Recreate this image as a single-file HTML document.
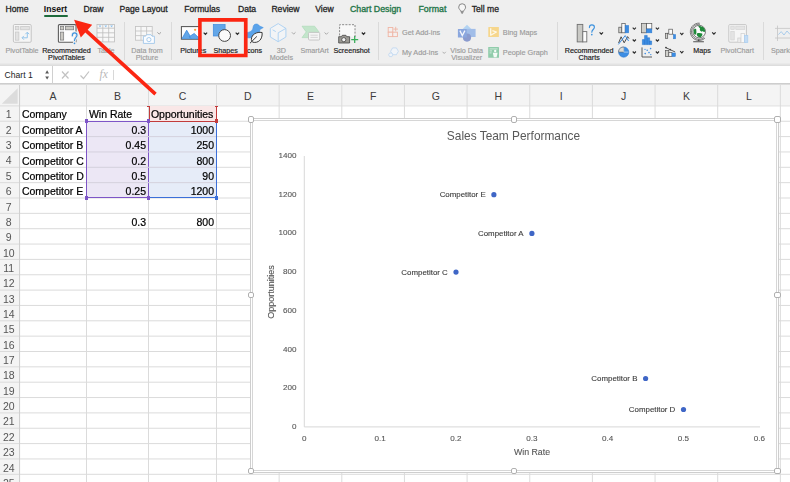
<!DOCTYPE html>
<html><head><meta charset="utf-8"><title>Excel</title>
<style>
html,body{margin:0;padding:0}
body{width:790px;height:482px;overflow:hidden;position:relative;background:#fff;font-family:"Liberation Sans",sans-serif;}
.abs{position:absolute}
.t{position:absolute;white-space:nowrap;line-height:1;}
.tab{font-size:8.6px;color:#262626;top:4.5px;-webkit-text-stroke:0.3px #262626}
.tabg{color:#26774a;-webkit-text-stroke:0.35px #26774a;font-size:8.8px}
.lb{font-size:7.2px;color:#1c1c1c;text-align:center;transform:translateX(-50%);-webkit-text-stroke:0.18px #1c1c1c;line-height:7.6px}
.lg{font-size:7.2px;color:#9b9b9b;-webkit-text-stroke:0.15px #9b9b9b;text-align:center;transform:translateX(-50%);line-height:7.5px}
.ll{font-size:7.3px;color:#9b9b9b;-webkit-text-stroke:0.15px #9b9b9b}
.sep{position:absolute;width:1px;background:#dadada;top:21.6px;height:38.6px}
.ch{font-size:10.5px;color:#3c3c3c;transform:translateX(-50%);top:91px}
.rh{font-size:10.5px;color:#555;left:0;width:17.5px;text-align:center}
.c{font-size:10.5px;color:#000;-webkit-text-stroke:0.22px #000}
.cr{font-size:10.5px;color:#000;text-align:right;-webkit-text-stroke:0.22px #000}
.cl{font-size:7.9px;color:#3c3c3c;-webkit-text-stroke:0.12px #3c3c3c}
.ax{font-size:8.1px;color:#555;-webkit-text-stroke:0.1px #555}
svg{position:absolute;overflow:visible}
</style></head><body>
<div id="app" style="position:absolute;left:0;top:0;width:790px;height:482px;overflow:hidden;opacity:0.999">

<div class="abs" style="left:0;top:0;width:790px;height:65px;background:#efefef"></div>
<div class="abs" style="left:0;top:62.5px;width:790px;height:3.7px;background:linear-gradient(#ececec,#dadada)"></div>
<div class="abs" style="left:0;top:66px;width:790px;height:18px;background:#fff"></div>
<div class="abs" style="left:0;top:83px;width:790px;height:2.4px;background:linear-gradient(#c6c6c6,#e4e4e4)"></div>
<div class="abs" style="left:0;top:85px;width:790px;height:20.4px;background:#f4f4f4"></div>
<div class="abs" style="left:0;top:105px;width:19.5px;height:377px;background:#f4f4f4"></div>
<span class="t tab " style="left:5.6px">Home</span>
<span class="t tab " style="left:83.5px">Draw</span>
<span class="t tab " style="left:119.5px">Page Layout</span>
<span class="t tab " style="left:184.3px">Formulas</span>
<span class="t tab " style="left:238px">Data</span>
<span class="t tab " style="left:271.4px">Review</span>
<span class="t tab " style="left:315.2px">View</span>
<span class="t tab tabg" style="left:349.9px">Chart Design</span>
<span class="t tab tabg" style="left:418.5px">Format</span>
<span class="t tab " style="left:471.7px">Tell me</span>
<span class="t tab" style="left:43.8px;font-weight:bold;-webkit-text-stroke:0;color:#111">Insert</span>
<div class="abs" style="left:43.5px;top:15.3px;width:24.5px;height:1.7px;background:#1e6b3c;border-radius:1px"></div>
<svg style="left:0;top:0" width="790" height="66" viewBox="0 0 790 66" fill="none">
<!-- PivotTable (disabled) -->
<g>
<rect x="13.4" y="24.5" width="17.8" height="17.8" rx="1.2" fill="#f6f6f6" stroke="#c0c0c0" stroke-width="0.9"/>
<rect x="15.3" y="26.4" width="3.6" height="3.4" fill="#e2e2e2" stroke="#c6c6c6" stroke-width="0.7"/>
<rect x="20.7" y="26.4" width="8.6" height="3.4" fill="#e2e2e2" stroke="#c6c6c6" stroke-width="0.7"/>
<rect x="15.3" y="32" width="3.6" height="8.2" fill="#e2e2e2" stroke="#c6c6c6" stroke-width="0.7"/>
<path d="M22.2 37.8H27.3V32.4M25.4 34.2L27.3 32.2L29.2 34.2M23.9 35.9L22 37.8L23.9 39.7" stroke="#96c6ec" stroke-width="1"/>
</g>
<!-- Recommended PivotTables -->
<g>
<rect x="58.4" y="24.6" width="17.6" height="17.6" rx="1" fill="#fdfdfd" stroke="#5e5e5e" stroke-width="1.1"/>
<rect x="60.3" y="26.5" width="3.4" height="3.3" fill="#cbc9c3" stroke="#777" stroke-width="0.7"/>
<rect x="65.5" y="26.5" width="8.2" height="3.3" fill="#cbc9c3" stroke="#777" stroke-width="0.7"/>
<rect x="60.3" y="32.1" width="3.4" height="8" fill="#cbc9c3" stroke="#777" stroke-width="0.7"/>
<rect x="70" y="31.5" width="9" height="13.5" fill="#efefef" opacity="0.0"/>
</g>
<!-- Table (disabled) -->
<g stroke="#bcbcbc" stroke-width="0.8">
<rect x="97" y="24.4" width="17.5" height="17.5" fill="#f8f8f8"/>
<path d="M102.8 24.4V41.9M108.7 24.4V41.9M97 28.2H114.5M97 32.8H114.5M97 37.3H114.5"/>
<path d="M98.5 25.6H101.5L100 27.2ZM104.3 25.6H107.3L105.8 27.2ZM110.1 25.6H113.1L111.6 27.2Z" fill="#86bdec" stroke="none"/>
</g>
<!-- Data from Picture (disabled) -->
<g stroke="#c0c0c0" stroke-width="0.8">
<rect x="135.4" y="26.4" width="16.8" height="13.8" fill="#f7f7f7"/>
<path d="M141 26.4V40.2M146.6 26.4V40.2M135.4 31H152.2M135.4 35.6H152.2"/>
<path d="M143.4 36.2H145.6L146.6 34.7H151L152 36.2H154.4V43.4H143.4Z" fill="#fafcff" stroke="#a4c9ea" stroke-width="0.95"/>
<circle cx="148.9" cy="39.6" r="2.1" fill="#fafcff" stroke="#a4c9ea" stroke-width="0.95"/>
<path d="M157.4 32.3L159.2 34.1L161 32.3" stroke="#a0a0a0" stroke-width="1"/>
</g>
<!-- Pictures -->
<g>
<rect x="181.4" y="26.6" width="19" height="12.6" fill="#fdfdfd" stroke="#505050" stroke-width="1"/>
<path d="M182 38.6L186.7 30.2L191.6 38.6Z" fill="#62a6e8" stroke="#2f80d8" stroke-width="0.7" stroke-linejoin="round"/>
<path d="M189.4 36.6L194.2 33.4L199.6 38.6H190.6Z" fill="#62a6e8" stroke="#2f80d8" stroke-width="0.7" stroke-linejoin="round"/>
<rect x="182" y="38.4" width="18" height="0.5" fill="#62a6e8"/>
<circle cx="195.1" cy="29.8" r="1.15" fill="#f5a141"/>
<path d="M203.7 32.6L205.4 34.4L207.1 32.6" stroke="#2a2a2a" stroke-width="1.2"/>
</g>
<!-- Shapes -->
<g>
<rect x="213.3" y="24.5" width="11.8" height="11.5" fill="#62a6e8" stroke="#3f8ade" stroke-width="0.7"/>
<circle cx="224.6" cy="35.5" r="5.9" fill="#fafafa" stroke="#444" stroke-width="1"/>
<path d="M235.7 32.6L237.4 34.4L239.1 32.6" stroke="#2a2a2a" stroke-width="1.2"/>
</g>
<!-- Icons -->
<g>
<path d="M253 27.4C252.6 30.6 250.4 32.4 246 32.6L246 37.6C249 38.2 254 38 257 36.6C259.4 35 260 31.6 259.7 29.7L263.3 27.6L259.5 26C258.6 24.4 257.2 23.9 256 24C254.2 24.2 253.2 25.6 253 27.4Z" fill="#5aa3ea" stroke="#3f8fe2" stroke-width="0.5"/>
<path d="M262.1 32.5C256.6 31.6 251.4 34.4 251.4 39.4C251.4 40.8 252 41.8 252.8 42.2C258.2 43.4 262.7 39.6 262.1 32.5Z" fill="#f8f8f8" stroke="#3a3a3a" stroke-width="1"/>
<path d="M250 43.2L256.9 36.4" stroke="#3a3a3a" stroke-width="1"/>
</g>
<!-- 3D Models (disabled) -->
<g stroke="#a9cff2" stroke-width="0.9">
<path d="M278.2 23.6L285.9 28.4V37L278.2 41.7L270.3 37V28.4Z" fill="#f2f4f6"/>
<path d="M272.6 29.8L275.8 31.6M278.2 32.8L285.9 28.4M278.2 32.8V41.7"/>
<path d="M291.9 32.3L293.7 34.1L295.5 32.3" stroke="#a8a8a8" stroke-width="1"/>
</g>
<!-- SmartArt (disabled) -->
<g>
<path d="M302 26.2H314.6L319 31.9L314.6 37.6H302L306.2 31.9Z" fill="#c3e5cb" stroke="#a8d8b4" stroke-width="0.6"/>
<rect x="308.5" y="32.4" width="11.2" height="7.6" rx="1" fill="#f5f5f5" stroke="#bdbdbd" stroke-width="0.8"/>
<path d="M310.4 35.2H317.8M310.4 37.4H317.8" stroke="#c8c8c8" stroke-width="0.7"/>
<path d="M324.6 32.5L326.4 34.3L328.2 32.5" stroke="#a8a8a8" stroke-width="1"/>
</g>
<!-- Screenshot -->
<g>
<path d="M339.6 35.4V24.7H355V37" fill="#f8f8f8" stroke="#6e6e6e" stroke-width="0.8" stroke-dasharray="2 1.3"/>
<path d="M338.7 36.7H341.4L342.3 35.3H345.9L346.8 36.7H349.6V43H338.7Z" fill="#9c9a94" stroke="#444" stroke-width="0.8" stroke-linejoin="round"/>
<circle cx="343.8" cy="39.7" r="2.1" fill="#f3f3f3" stroke="#444" stroke-width="0.8"/>
<path d="M354.7 36.1V43.1M351.2 39.6H358.2" stroke="#36ad57" stroke-width="1.25"/>
<path d="M361.8 32.5L363.5 34.3L365.2 32.5" stroke="#2a2a2a" stroke-width="1.2"/>
</g>
<!-- Get Add-ins (disabled) -->
<g stroke="#efb5a5" stroke-width="0.9">
<rect x="388.2" y="27.5" width="4.6" height="4.7" fill="#f5efee"/>
<rect x="388.2" y="32.2" width="4.6" height="4.4" fill="#f5efee"/>
<rect x="392.8" y="32.2" width="4.6" height="4.4" fill="#f5efee"/>
<path d="M395.7 26.8V31.4M393.4 29.1H398"/>
</g>
<!-- My Add-ins (disabled) -->
<g stroke="#bcd6f0" stroke-width="0.8">
<path d="M398.4 51.3L396.4 54.7L392.6 54.7L390.6 51.3L392.6 47.9L396.4 47.9Z" fill="#f1f4f8"/>
<path d="M392.8 54.8L391.8 56.6L389.6 56.6L388.6 54.8L389.6 53.0L391.8 53.0Z" fill="#f1f4f8"/>
<path d="M442.6 51.8L444.2 53.5L445.8 51.8" stroke="#a8a8a8" stroke-width="0.9"/>
</g>
<!-- Visio -->
<g>
<path d="M467 24.7L473.4 31L467 37.3L460.6 31Z" fill="#b3d3f2"/>
<rect x="466.6" y="28.9" width="9" height="8.1" fill="#a1bde8"/>
<circle cx="467" cy="37.6" r="4.1" fill="#8b9bce"/>
<rect x="457.9" y="28.9" width="8.9" height="8.7" rx="0.4" fill="#8ba7de"/>
<path d="M459.9 30.6L462.3 35.6L464.9 30.6" stroke="#f4f6fc" stroke-width="1.3"/>
</g>
<!-- Bing Maps -->
<g>
<rect x="488.3" y="26.9" width="10.6" height="10.1" rx="0.3" fill="#f6d68c"/>
<path d="M490.7 28.2V35.2L496.4 32L492.4 30.6" stroke="#fdf8ea" stroke-width="1.3" stroke-linejoin="round"/>
</g>
<!-- People Graph -->
<g>
<rect x="488.2" y="47.1" width="10.8" height="10.6" rx="0.3" fill="#90ccab"/>
<path d="M489.6 48.9H497.6M489.6 50.9H492M489.6 52.9H491.6" stroke="#dff1e6" stroke-width="0.8"/>
<circle cx="495.2" cy="51" r="1.2" fill="#f4fbf6"/>
<path d="M492.8 52.8H497.6L496.6 57.2H493.8Z" fill="#f4fbf6"/>
</g>
<!-- Recommended Charts -->
<g>
<rect x="577.2" y="24.4" width="5.6" height="17.5" fill="#c9c9c5" stroke="#707070" stroke-width="0.9"/>
<rect x="582.8" y="31.6" width="4" height="10.3" fill="#fdfdfd" stroke="#707070" stroke-width="0.9"/>
<path d="M599.6 32.3L601.3 34.1L603 32.3" stroke="#2a2a2a" stroke-width="1.2"/>
</g>
<!-- small chart icons col1 -->
<g>
<rect x="618.8" y="27.2" width="3" height="5.6" fill="#d0d0cc" stroke="#555" stroke-width="0.7"/>
<rect x="621.8" y="23.6" width="3.4" height="9.2" fill="#fbfbfb" stroke="#555" stroke-width="0.7"/>
<rect x="625.2" y="25.6" width="3.4" height="7.2" fill="#3c8de3" stroke="#2f7bd0" stroke-width="0.6"/>
<path d="M618.6 43L621.1 36.8L624.2 42.8L627.6 36.6L629 38.6" stroke="#3a3a3a" stroke-width="0.9"/>
<path d="M618.4 44.4L625.2 35.6L628.6 41" stroke="#3c8de3" stroke-width="1"/>
<circle cx="623.7" cy="52.1" r="5.1" fill="#3c8de3" stroke="#2f7bd0" stroke-width="0.6"/>
<path d="M623.7 52.1V47H623.2A5.1 5.1 0 0 0 618.6 52.1Z" fill="#dcdcd8" stroke="#666" stroke-width="0.6"/>
<path d="M623.7 47.6V52.1H628.3" stroke="#e8f1fc" stroke-width="0.6"/>
</g>
<!-- col2 -->
<g>
<rect x="641.6" y="23.6" width="5" height="9.2" fill="#cfcfcb" stroke="#555" stroke-width="0.7"/>
<rect x="646.6" y="23.6" width="5.2" height="5.4" fill="#fbfbfb" stroke="#555" stroke-width="0.7"/>
<rect x="646.6" y="29" width="5.2" height="3.8" fill="#3c8de3" stroke="#2f7bd0" stroke-width="0.6"/>
<path d="M642.4 44.6V39.6H644.6V35.4H647.2V37.8H649.6V41H651.6V44.6Z" fill="#3c8de3" stroke="#2a78d0" stroke-width="0.6"/>
<path d="M644.6 39.6V44.6M647.2 37.8V44.6M649.6 41V44.6" stroke="#2a6fc4" stroke-width="0.5"/>
<path d="M642 47.4V57H652" stroke="#4a4a4a" stroke-width="0.9"/>
<g fill="#3c8de3"><circle cx="645.2" cy="53.6" r="0.8"/><circle cx="647.2" cy="50.2" r="0.8"/><circle cx="649" cy="52.6" r="0.8"/><circle cx="650.6" cy="48.6" r="0.8"/><circle cx="650.8" cy="54.6" r="0.7"/><circle cx="645" cy="49.4" r="0.6"/></g>
</g>
<!-- col3 -->
<g>
<rect x="665.5" y="33.3" width="2.2" height="5" fill="#d2d2ce" stroke="#555" stroke-width="0.7"/>
<rect x="668.8" y="29.2" width="3.6" height="5" fill="#fbfbfb" stroke="#555" stroke-width="0.7"/>
<path d="M667.7 33.3H668.8M672.4 34.2H673.5" stroke="#555" stroke-width="0.7"/>
<rect x="673.4" y="34.6" width="2.2" height="4.2" fill="#3c8de3" stroke="#2f7bd0" stroke-width="0.5"/>
<path d="M665.4 47.4L670 49.6L675.2 52" stroke="#444" stroke-width="0.9"/>
<circle cx="666" cy="47.6" r="0.9" fill="#444"/><circle cx="670.2" cy="49.6" r="0.9" fill="#444"/>
<rect x="665.6" y="50.6" width="3.2" height="6" fill="#d0d0cc" stroke="#555" stroke-width="0.7"/>
<rect x="668.8" y="52.4" width="3.2" height="4.2" fill="#fbfbfb" stroke="#555" stroke-width="0.7"/>
<rect x="672" y="53" width="3.4" height="3.6" fill="#3c8de3" stroke="#2f7bd0" stroke-width="0.5"/>
</g>
<!-- chevrons for small charts -->
<g stroke="#2a2a2a" stroke-width="1.1">
<path d="M632.7 27.6L634.3 29.3L635.9 27.6M632.7 39.5L634.3 41.2L635.9 39.5M632.7 51.5L634.3 53.2L635.9 51.5"/>
<path d="M655.8 27.6L657.4 29.3L659 27.6M655.8 39.5L657.4 41.2L659 39.5M655.8 51.5L657.4 53.2L659 51.5"/>
<path d="M680.2 32.9L681.8 34.6L683.4 32.9M680.2 51.2L681.8 52.9L683.4 51.2"/>
</g>
<!-- Maps globe -->
<g>
<circle cx="699.2" cy="31.6" r="6.3" fill="#fcfcfc" stroke="#5a5a5a" stroke-width="0.8"/>
<path d="M693.6 30.2C694 29.2 695 28.6 695.8 28.8C696.6 29.4 696.2 30.6 696.4 31.8C696.6 33 696 34.2 695.2 35C694.2 34.4 693.4 32.2 693.6 30.2Z" fill="#1f8a3a"/>
<path d="M698.4 26C699.4 25.6 700.4 25.8 701 26.6C702.6 26.4 704 27.6 704.8 29.4C705.2 30.6 705.2 31.6 704.4 32C703.2 31.4 702.2 32 701 31.2C699.8 30.6 699.6 29.2 700 28.2C699.2 27.8 698.4 27 698.4 26Z" fill="#1f8a3a"/>
<path d="M696.8 33.6C698.4 32.8 700.6 33 702.2 33.6C702.8 34.8 702 36.2 700.8 37.2C699.8 37.6 698.6 37.4 697.8 36.6C697 35.8 696.4 34.6 696.8 33.6Z" fill="#1f8a3a"/>
<path d="M699.6 23.1A8.7 8.7 0 1 0 704.9 38.2" stroke="#4a4a4a" stroke-width="0.7"/>
<path d="M700 24.2A7.6 7.6 0 1 0 704.2 37.4" stroke="#4a4a4a" stroke-width="0.7"/>
<path d="M698.6 39.4V41.2" stroke="#4a4a4a" stroke-width="1.2"/>
<path d="M693.2 41.7H703.9" stroke="#6a6a6a" stroke-width="1.2"/>
<path d="M712.2 32.4L713.9 34.2L715.6 32.4" stroke="#2a2a2a" stroke-width="1.2"/>
</g>
<!-- PivotChart (disabled) -->
<g>
<rect x="728.8" y="24.6" width="17.6" height="17.6" rx="1" fill="#f6f6f6" stroke="#c2c2c2" stroke-width="0.9"/>
<rect x="730.8" y="26.2" width="3.4" height="3.3" fill="#e4e4e4" stroke="#d0d0d0" stroke-width="0.6"/>
<rect x="735.8" y="26.2" width="9" height="3.3" fill="#e4e4e4" stroke="#d0d0d0" stroke-width="0.6"/>
<rect x="730.8" y="31.4" width="3.4" height="8.6" fill="#e4e4e4" stroke="#d0d0d0" stroke-width="0.6"/>
<rect x="737.8" y="38" width="3.2" height="4.6" fill="#ececec" stroke="#cfcfcf" stroke-width="0.7"/>
<rect x="741" y="33.6" width="3.4" height="9" fill="#f8f8f8" stroke="#cfcfcf" stroke-width="0.7"/>
<rect x="744.4" y="35.6" width="3.4" height="7" fill="#c3dcf5" stroke="#a9cdf0" stroke-width="0.7"/>
</g>
<!-- Sparklines (disabled, cut off) -->
<g stroke="#c4c4c4" stroke-width="0.8">
<path d="M777.5 25.6V41M775 28.4H790M775 38H790"/>
<path d="M778.4 34.6L781.2 31.6L784 35L787 31L790 34.4" stroke="#a4c9ea" stroke-width="0.95"/>
</g>
<!-- Tell me bulb -->
<g stroke="#6a6a6a" stroke-width="0.8">
<path d="M460.7 11.3C460.5 9.9 458.7 9.1 458.7 7.2A3.45 3.45 0 0 1 465.6 7.2C465.6 9.1 463.8 9.9 463.6 11.3Z" fill="#f6f6f6"/>
<path d="M460.9 12.3H463.4M461.5 13.3H462.8"/>
</g>
<!-- question marks -->
<g fill="none" stroke-linecap="round">
<path d="M72.3 35.8C72.3 33.6 73.4 32.9 74.7 32.9C76 32.9 77 33.8 77 35.2C77 37.4 74.5 37.6 74.5 40.6" stroke="#efefef" stroke-width="3.4"/>
<circle cx="74.5" cy="43.3" r="1.8" fill="#efefef" stroke="none"/>
<path d="M72.3 35.8C72.3 33.6 73.4 32.9 74.7 32.9C76 32.9 77 33.8 77 35.2C77 37.4 74.5 37.6 74.5 40.6" stroke="#3f93de" stroke-width="1.15"/>
<circle cx="74.5" cy="43.3" r="0.85" fill="#3f93de" stroke="none"/>
<path d="M589.4 27.6C589.4 25.6 590.6 24.9 591.9 24.9C593.2 24.9 594.4 25.8 594.4 27.2C594.4 29.4 591.8 29.6 591.8 32.2" stroke="#3f93de" stroke-width="1.15"/>
<circle cx="591.8" cy="34.6" r="0.85" fill="#3f93de" stroke="none"/>
</g>
</svg>
<span class="t lg" style="left:22px;top:46.9px">PivotTable</span>
<span class="t lb" style="left:66.5px;top:46.9px">Recommended<br>PivotTables</span>
<span class="t lg" style="left:106px;top:46.9px">Table</span>
<span class="t lg" style="left:147px;top:46.9px">Data from<br>Picture</span>
<span class="t lb" style="left:193.3px;top:46.9px">Pictures</span>
<span class="t lb" style="left:225.7px;top:46.9px">Shapes</span>
<span class="t lb" style="left:253.6px;top:46.9px">Icons</span>
<span class="t lg" style="left:281.4px;top:46.9px">3D<br>Models</span>
<span class="t lg" style="left:314.7px;top:46.9px">SmartArt</span>
<span class="t lb" style="left:351.6px;top:46.9px">Screenshot</span>
<span class="t ll" style="left:402px;top:28.5px">Get Add-ins</span>
<span class="t ll" style="left:402px;top:48.7px">My Add-ins</span>
<span class="t lg" style="left:466.7px;top:46.9px">Visio Data<br>Visualizer</span>
<span class="t ll" style="left:502.8px;top:28.5px">Bing Maps</span>
<span class="t ll" style="left:502.8px;top:48.7px">People Graph</span>
<span class="t lb" style="left:589.2px;top:46.9px">Recommended<br>Charts</span>
<span class="t lb" style="left:702px;top:46.9px">Maps</span>
<span class="t lg" style="left:737.2px;top:46.9px">PivotChart</span>
<span class="t lg" style="left:771px;top:46.9px;transform:none">Sparklines</span>
<div class="sep" style="left:123.5px"></div>
<div class="sep" style="left:171.3px"></div>
<div class="sep" style="left:378.2px"></div>
<div class="sep" style="left:557.3px"></div>
<div class="sep" style="left:762.5px"></div>
<span class="t" style="left:4.6px;top:70.9px;font-size:8.6px;color:#222">Chart 1</span>
<div class="abs" style="left:52px;top:66px;width:1px;height:18px;background:#d0d0d0"></div>
<div class="abs" style="left:113px;top:70px;width:1px;height:10px;background:#d8d8d8"></div>
<svg style="left:0;top:0" width="790" height="100">
<path d="M45.2 73.4 L47.1 70.3 L49 73.4 Z M45.2 76.5 L47.1 79.6 L49 76.5 Z" fill="#5a5a5a"/>
<path d="M62 71.5 L68.5 78.5 M68.5 71.5 L62 78.5" stroke="#c2c2c2" stroke-width="1.2" fill="none"/>
<path d="M80.5 75.5 L83.5 78.5 L89 71.5" stroke="#c2c2c2" stroke-width="1.2" fill="none"/>
</svg>
<span class="t" style="left:99.6px;top:68.6px;font-size:11.5px;font-style:italic;color:#b8b8b8;font-family:'Liberation Serif',serif">fx</span>
<svg style="left:0;top:0" width="790" height="482"><path d="M19.5 85V482 M86.5 85V482 M148.5 85V482 M216.5 85V482 M279.15 85V482 M341.8 85V482 M404.45 85V482 M467.1 85V482 M529.75 85V482 M592.4 85V482 M655.05 85V482 M717.7 85V482 M780.35 85V482 M843.0 85V482 M0 105.90H790 M0 121.25H790 M0 136.60H790 M0 151.95H790 M0 167.30H790 M0 182.65H790 M0 198.00H790 M0 213.35H790 M0 228.70H790 M0 244.05H790 M0 259.40H790 M0 274.75H790 M0 290.10H790 M0 305.45H790 M0 320.80H790 M0 336.15H790 M0 351.50H790 M0 366.85H790 M0 382.20H790 M0 397.55H790 M0 412.90H790 M0 428.25H790 M0 443.60H790 M0 458.95H790 M0 474.30H790 M0 489.65H790" stroke="#dbdbdb" stroke-width="1" fill="none"/><path d="M1.8 103.7 L17.7 103.7 L17.7 88.2 Z" fill="#dcdcdc"/><path d="M19.6 85V482" stroke="#cfcfcf" stroke-width="1" fill="none"/></svg>
<span class="t ch" style="left:53.0px">A</span>
<span class="t ch" style="left:117.5px">B</span>
<span class="t ch" style="left:182.5px">C</span>
<span class="t ch" style="left:247.8px">D</span>
<span class="t ch" style="left:310.5px">E</span>
<span class="t ch" style="left:373.1px">F</span>
<span class="t ch" style="left:435.8px">G</span>
<span class="t ch" style="left:498.4px">H</span>
<span class="t ch" style="left:561.1px">I</span>
<span class="t ch" style="left:623.7px">J</span>
<span class="t ch" style="left:686.4px">K</span>
<span class="t ch" style="left:749.0px">L</span>
<span class="t ch" style="left:811.7px">M</span>
<span class="t rh" style="top:109.4px">1</span>
<span class="t rh" style="top:124.8px">2</span>
<span class="t rh" style="top:140.1px">3</span>
<span class="t rh" style="top:155.4px">4</span>
<span class="t rh" style="top:170.8px">5</span>
<span class="t rh" style="top:186.2px">6</span>
<span class="t rh" style="top:201.5px">7</span>
<span class="t rh" style="top:216.9px">8</span>
<span class="t rh" style="top:232.2px">9</span>
<span class="t rh" style="top:247.6px">10</span>
<span class="t rh" style="top:262.9px">11</span>
<span class="t rh" style="top:278.2px">12</span>
<span class="t rh" style="top:293.6px">13</span>
<span class="t rh" style="top:308.9px">14</span>
<span class="t rh" style="top:324.3px">15</span>
<span class="t rh" style="top:339.6px">16</span>
<span class="t rh" style="top:355.0px">17</span>
<span class="t rh" style="top:370.4px">18</span>
<span class="t rh" style="top:385.7px">19</span>
<span class="t rh" style="top:401.0px">20</span>
<span class="t rh" style="top:416.4px">21</span>
<span class="t rh" style="top:431.8px">22</span>
<span class="t rh" style="top:447.1px">23</span>
<span class="t rh" style="top:462.5px">24</span>
<span class="t rh" style="top:477.8px">25</span>
<div class="abs" style="left:86.2px;top:120.8px;width:62.9px;height:77.4px;background:#ece7f5;box-sizing:border-box;border:1.2px solid #7e55c7"></div>
<div class="abs" style="left:149px;top:120.8px;width:67.8px;height:77.4px;background:#e6ecf8;box-sizing:border-box;border:1.2px solid #3b6fd9;border-left:none;border-top:none"></div>
<div class="abs" style="left:148.5px;top:106.4px;width:68.3px;height:15.2px;background:#f9e7e7;box-sizing:border-box;border:1.2px solid #c23b3b;border-top:none"></div>
<svg style="left:0;top:0" width="790" height="482"><path d="M87.5 136.60H216 M87.5 151.95H216 M87.5 167.30H216 M87.5 182.65H216" stroke="#d4d1dd" stroke-width="1" fill="none"/></svg>
<div class="abs" style="left:84.8px;top:119.3px;width:3.4px;height:3.4px;background:#7e55c7"></div>
<div class="abs" style="left:147.10000000000002px;top:119.3px;width:3.4px;height:3.4px;background:#7e55c7"></div>
<div class="abs" style="left:84.8px;top:196.3px;width:3.4px;height:3.4px;background:#7e55c7"></div>
<div class="abs" style="left:147.10000000000002px;top:196.3px;width:3.4px;height:3.4px;background:#7e55c7"></div>
<div class="abs" style="left:214.8px;top:196.3px;width:3.4px;height:3.4px;background:#3b6fd9"></div>
<div class="abs" style="left:214.8px;top:119.3px;width:3.4px;height:3.4px;background:#c23b3b"></div>
<div class="abs" style="left:147.3px;top:105.6px;width:3px;height:1.2px;background:#c23b3b"></div>
<div class="abs" style="left:215px;top:105.6px;width:3px;height:1.2px;background:#c23b3b"></div>
<span class="t c" style="left:21.9px;top:108.6px">Company</span>
<span class="t c" style="left:88.9px;top:108.6px">Win Rate</span>
<span class="t c" style="left:150.9px;top:108.6px">Opportunities</span>
<span class="t c" style="left:21.9px;top:124.8px">Competitor A</span>
<span class="t cr" style="right:644.0px;top:124.8px">0.3</span>
<span class="t cr" style="right:576.0px;top:124.8px">1000</span>
<span class="t c" style="left:21.9px;top:140.2px">Competitor B</span>
<span class="t cr" style="right:644.0px;top:140.2px">0.45</span>
<span class="t cr" style="right:576.0px;top:140.2px">250</span>
<span class="t c" style="left:21.9px;top:155.5px">Competitor C</span>
<span class="t cr" style="right:644.0px;top:155.5px">0.2</span>
<span class="t cr" style="right:576.0px;top:155.5px">800</span>
<span class="t c" style="left:21.9px;top:170.9px">Competitor D</span>
<span class="t cr" style="right:644.0px;top:170.9px">0.5</span>
<span class="t cr" style="right:576.0px;top:170.9px">90</span>
<span class="t c" style="left:21.9px;top:186.2px">Competitor E</span>
<span class="t cr" style="right:644.0px;top:186.2px">0.25</span>
<span class="t cr" style="right:576.0px;top:186.2px">1200</span>
<span class="t cr" style="right:644.0px;top:217.0px">0.3</span>
<span class="t cr" style="right:576.0px;top:217.0px">800</span>
<div class="abs" style="left:249.5px;top:118.0px;width:529.5px;height:354.5px;background:#fff;box-sizing:border-box;border:1px solid #cecece"></div>
<div class="abs" style="left:251.5px;top:120.0px;width:525.5px;height:350.5px;background:#fff;box-sizing:border-box;border:1px solid #d6d6d6"></div>
<div class="abs" style="left:247.5px;top:116.0px;width:6.6px;height:6.6px;background:#fff;box-sizing:border-box;border:1px solid #b0b0b0;border-radius:2px"></div>
<div class="abs" style="left:510.75px;top:116.0px;width:6.6px;height:6.6px;background:#fff;box-sizing:border-box;border:1px solid #b0b0b0;border-radius:2px"></div>
<div class="abs" style="left:774.0px;top:116.0px;width:6.6px;height:6.6px;background:#fff;box-sizing:border-box;border:1px solid #b0b0b0;border-radius:2px"></div>
<div class="abs" style="left:247.5px;top:291.75px;width:6.6px;height:6.6px;background:#fff;box-sizing:border-box;border:1px solid #b0b0b0;border-radius:2px"></div>
<div class="abs" style="left:774.0px;top:291.75px;width:6.6px;height:6.6px;background:#fff;box-sizing:border-box;border:1px solid #b0b0b0;border-radius:2px"></div>
<div class="abs" style="left:247.5px;top:467.5px;width:6.6px;height:6.6px;background:#fff;box-sizing:border-box;border:1px solid #b0b0b0;border-radius:2px"></div>
<div class="abs" style="left:510.75px;top:467.5px;width:6.6px;height:6.6px;background:#fff;box-sizing:border-box;border:1px solid #b0b0b0;border-radius:2px"></div>
<div class="abs" style="left:774.0px;top:467.5px;width:6.6px;height:6.6px;background:#fff;box-sizing:border-box;border:1px solid #b0b0b0;border-radius:2px"></div>
<svg style="left:0;top:0" width="790" height="482"><path d="M304.3 156V426.9H760" stroke="#d4d4d4" stroke-width="0.9" fill="none"/>
<circle cx="531.9" cy="233.4" r="2.6" fill="#3f66c6"/>
<circle cx="645.6" cy="378.5" r="2.6" fill="#3f66c6"/>
<circle cx="456.0" cy="272.1" r="2.6" fill="#3f66c6"/>
<circle cx="683.5" cy="409.5" r="2.6" fill="#3f66c6"/>
<circle cx="493.9" cy="194.7" r="2.6" fill="#3f66c6"/>
</svg>
<span class="t cl" style="right:266.4px;top:230.0px">Competitor A</span>
<span class="t cl" style="right:152.6px;top:375.1px">Competitor B</span>
<span class="t cl" style="right:342.2px;top:268.7px">Competitor C</span>
<span class="t cl" style="right:114.7px;top:406.1px">Competitor D</span>
<span class="t cl" style="right:304.3px;top:191.3px">Competitor E</span>
<span class="t ax" style="right:493.4px;top:422.9px">0</span>
<span class="t ax" style="right:493.4px;top:384.2px">200</span>
<span class="t ax" style="right:493.4px;top:345.5px">400</span>
<span class="t ax" style="right:493.4px;top:306.8px">600</span>
<span class="t ax" style="right:493.4px;top:268.1px">800</span>
<span class="t ax" style="right:493.4px;top:229.4px">1000</span>
<span class="t ax" style="right:493.4px;top:190.7px">1200</span>
<span class="t ax" style="right:493.4px;top:152.0px">1400</span>
<span class="t ax" style="left:304.3px;top:435px;transform:translateX(-50%)">0</span>
<span class="t ax" style="left:380.1px;top:435px;transform:translateX(-50%)">0.1</span>
<span class="t ax" style="left:456.0px;top:435px;transform:translateX(-50%)">0.2</span>
<span class="t ax" style="left:531.9px;top:435px;transform:translateX(-50%)">0.3</span>
<span class="t ax" style="left:607.7px;top:435px;transform:translateX(-50%)">0.4</span>
<span class="t ax" style="left:683.5px;top:435px;transform:translateX(-50%)">0.5</span>
<span class="t ax" style="left:759.4px;top:435px;transform:translateX(-50%)">0.6</span>
<span class="t" style="left:513.5px;top:131px;transform:translateX(-50%);font-size:11.9px;color:#595959">Sales Team Performance</span>
<span class="t ax" style="left:532px;top:447.8px;transform:translateX(-50%);font-size:8.8px">Win Rate</span>
<span class="t ax" style="left:270.6px;top:291.7px;transform:translate(-50%,-50%) rotate(-90deg);font-size:9px">Opportunities</span>
<svg style="left:0;top:0" width="790" height="70"><path fill-rule="evenodd" d="M198.1 18.1H247.6V57.2H198.1Z M201.7 21.7V53.8H243.9V21.7Z" fill="#fb2612"/></svg>
<svg style="left:0;top:0" width="790" height="482"><polygon points="74.1,19.8 80.8,37.4 85.3,32.4 154.3,95.4 156.7,92.8 87.7,29.8 92.2,24.8" fill="#fb2612"/></svg>
</div>
</body></html>
